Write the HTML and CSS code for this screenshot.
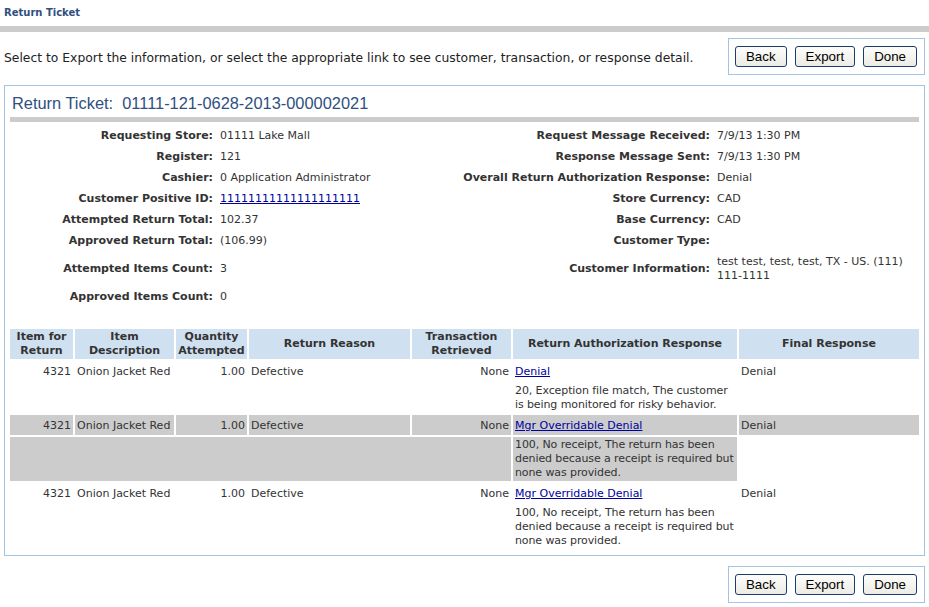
FILE: index.html
```html
<!DOCTYPE html>
<html lang="en">
<head>
    <meta charset="UTF-8">
    <meta name="viewport" content="width=device-width, initial-scale=1.0">
    <title>Return Ticket</title>
    <link rel="stylesheet" href="styles.css">
</head>
<body>
    <div class="page-title">Return Ticket</div>
    <div class="title-bar"></div>

    <div class="toolbar">
        <p class="intro">Select to Export the information, or select the appropriate link to see customer, transaction, or response detail.</p>
        <div class="button-box">
            <button type="button">Back</button>
            <button type="button">Export</button>
            <button type="button">Done</button>
        </div>
    </div>

    <div class="panel">
        <h2 class="panel-title">Return Ticket:&nbsp; 01111-121-0628-2013-000002021</h2>
        <div class="panel-bar"></div>

        <div class="details">
            <div class="label">Requesting Store:</div>
            <div class="value">01111 Lake Mall</div>
            <div class="label">Request Message Received:</div>
            <div class="value">7/9/13 1:30 PM</div>

            <div class="label">Register:</div>
            <div class="value">121</div>
            <div class="label">Response Message Sent:</div>
            <div class="value">7/9/13 1:30 PM</div>

            <div class="label">Cashier:</div>
            <div class="value">0 Application Administrator</div>
            <div class="label">Overall Return Authorization Response:</div>
            <div class="value">Denial</div>

            <div class="label">Customer Positive ID:</div>
            <div class="value"><a href="#">11111111111111111111</a></div>
            <div class="label">Store Currency:</div>
            <div class="value">CAD</div>

            <div class="label">Attempted Return Total:</div>
            <div class="value">102.37</div>
            <div class="label">Base Currency:</div>
            <div class="value">CAD</div>

            <div class="label">Approved Return Total:</div>
            <div class="value">(106.99)</div>
            <div class="label">Customer Type:</div>
            <div class="value"></div>

            <div class="label">Attempted Items Count:</div>
            <div class="value">3</div>
            <div class="label">Customer Information:</div>
            <div class="value">test test, test, test, TX - US. (111) 111-1111</div>

            <div class="label">Approved Items Count:</div>
            <div class="value">0</div>
            <div class="label"></div>
            <div class="value"></div>
        </div>

        <table class="items">
            <colgroup>
                <col class="col-item">
                <col class="col-desc">
                <col class="col-qty">
                <col class="col-reason">
                <col class="col-trans">
                <col class="col-auth">
                <col>
            </colgroup>
            <thead>
                <tr>
                    <th>Item for Return</th>
                    <th>Item Description</th>
                    <th>Quantity Attempted</th>
                    <th>Return Reason</th>
                    <th>Transaction Retrieved</th>
                    <th>Return Authorization Response</th>
                    <th>Final Response</th>
                </tr>
            </thead>
            <tbody>
                <tr class="main-row">
                    <td class="num">4321</td>
                    <td>Onion Jacket Red</td>
                    <td class="num">1.00</td>
                    <td>Defective</td>
                    <td class="num">None</td>
                    <td><a href="#">Denial</a></td>
                    <td>Denial</td>
                </tr>
                <tr class="detail-row">
                    <td colspan="5"></td>
                    <td>20, Exception file match, The customer is being monitored for risky behavior.</td>
                </tr>

                <tr class="main-row alt">
                    <td class="num">4321</td>
                    <td>Onion Jacket Red</td>
                    <td class="num">1.00</td>
                    <td>Defective</td>
                    <td class="num">None</td>
                    <td><a href="#">Mgr Overridable Denial</a></td>
                    <td>Denial</td>
                </tr>
                <tr class="detail-row alt">
                    <td colspan="5"></td>
                    <td>100, No receipt, The return has been denied because a receipt is required but none was provided.</td>
                </tr>

                <tr class="main-row">
                    <td class="num">4321</td>
                    <td>Onion Jacket Red</td>
                    <td class="num">1.00</td>
                    <td>Defective</td>
                    <td class="num">None</td>
                    <td><a href="#">Mgr Overridable Denial</a></td>
                    <td>Denial</td>
                </tr>
                <tr class="detail-row">
                    <td colspan="5"></td>
                    <td>100, No receipt, The return has been denied because a receipt is required but none was provided.</td>
                </tr>
            </tbody>
        </table>
    </div>

    <div class="toolbar bottom">
        <div class="button-box">
            <button type="button">Back</button>
            <button type="button">Export</button>
            <button type="button">Done</button>
        </div>
    </div>
</body>
</html>
```

FILE: styles.css
```css
* {
    margin: 0;
    padding: 0;
    box-sizing: border-box;
}

body {
    background: #fff;
    color: #333;
    font-family: "DejaVu Sans", Verdana, sans-serif;
    font-size: 11px;
    line-height: 14px;
}

a {
    color: #00009c;
}

.page-title {
    font-size: 10px;
    font-weight: bold;
    color: #2f4f7f;
    padding: 6px 4px 0;
    height: 26px;
}

.title-bar {
    height: 6px;
    background: #cccccc;
}

.toolbar {
    display: flex;
    justify-content: space-between;
    align-items: center;
    padding: 6px 4px 0;
}

.toolbar.bottom {
    justify-content: flex-end;
    padding-top: 10px;
}

.intro {
    font-size: 12.35px;
    color: #222;
    padding-top: 2px;
}

.button-box {
    display: flex;
    gap: 8px;
    border: 1px solid #a4c4e0;
    padding: 7px 7px 7px 6px;
}

.button-box button {
    font-family: "Liberation Sans", Arial, sans-serif;
    font-size: 13.33px;
    line-height: 15px;
    color: #000;
    padding: 2px 10px;
    border: 1px solid #1c3d6c;
    border-radius: 3px;
    background: linear-gradient(#fdfdfb, #ecebe5);
    cursor: pointer;
}

.panel {
    margin: 10px 4px 0;
    border: 1px solid #a4c4e0;
    padding: 0 5px 4px;
}

.panel-title {
    font-family: "Liberation Sans", Arial, sans-serif;
    font-size: 16.4px;
    font-weight: normal;
    line-height: 18px;
    color: #2f4f7f;
    padding: 8px 2px 5px;
}

.panel-bar {
    height: 5px;
    background: #cccccc;
}

.details {
    display: grid;
    grid-template-columns: 203px 232px 251px 1fr;
    column-gap: 7px;
    align-items: center;
    margin-top: 3px;
}

.details .label {
    font-weight: bold;
    text-align: right;
    padding: 3.5px 0;
    min-height: 21px;
}

.details .value {
    padding: 3.5px 0;
    min-height: 21px;
}

.items {
    width: calc(100% + 4px);
    margin: 20px -2px 0;
    border-collapse: separate;
    border-spacing: 2px;
    table-layout: fixed;
}

.col-item { width: 63px; }
.col-desc { width: 99px; }
.col-qty { width: 71px; }
.col-reason { width: 161px; }
.col-trans { width: 99px; }
.col-auth { width: 224px; }

.items th {
    background: #cfe0f0;
    font-weight: bold;
    text-align: center;
    padding: 1px 2px;
    vertical-align: middle;
}

.items td {
    vertical-align: top;
    padding: 4px 2px 2px;
}

.items .detail-row td {
    padding: 1px 0 1px 2px;
    letter-spacing: -0.1px;
}

.items td.num {
    text-align: right;
}

.items .alt td {
    background: #cccccc;
}
```
